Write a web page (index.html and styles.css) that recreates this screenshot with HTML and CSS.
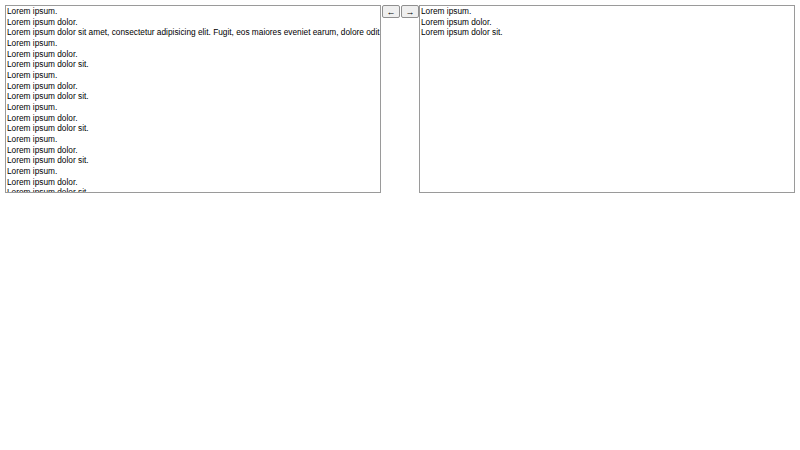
FILE: index.html
```html
<!DOCTYPE html>
<html>
<head>
<meta charset="utf-8">
<link rel="stylesheet" href="styles.css">
</head>
<body>
<div class="wrap">
  <div class="list">
    <div class="opt">Lorem ipsum.</div>
    <div class="opt">Lorem ipsum dolor.</div>
    <div class="opt">Lorem ipsum dolor sit amet, consectetur adipisicing elit. Fugit, eos maiores eveniet earum, dolore odit quia voluptatum.</div>
    <div class="opt">Lorem ipsum.</div>
    <div class="opt">Lorem ipsum dolor.</div>
    <div class="opt">Lorem ipsum dolor sit.</div>
    <div class="opt">Lorem ipsum.</div>
    <div class="opt">Lorem ipsum dolor.</div>
    <div class="opt">Lorem ipsum dolor sit.</div>
    <div class="opt">Lorem ipsum.</div>
    <div class="opt">Lorem ipsum dolor.</div>
    <div class="opt">Lorem ipsum dolor sit.</div>
    <div class="opt">Lorem ipsum.</div>
    <div class="opt">Lorem ipsum dolor.</div>
    <div class="opt">Lorem ipsum dolor sit.</div>
    <div class="opt">Lorem ipsum.</div>
    <div class="opt">Lorem ipsum dolor.</div>
    <div class="opt">Lorem ipsum dolor sit.</div>
    <div class="opt">Lorem ipsum.</div>
    <div class="opt">Lorem ipsum dolor.</div>
  </div>
  <div class="btns">
    <button class="btn">&larr;</button>
    <button class="btn">&rarr;</button>
  </div>
  <div class="list">
    <div class="opt">Lorem ipsum.</div>
    <div class="opt">Lorem ipsum dolor.</div>
    <div class="opt">Lorem ipsum dolor sit.</div>
  </div>
</div>
</body>
</html>
```
FILE: styles.css
```css
html, body {
  margin: 0;
  padding: 0;
  background: #fff;
}
body {
  padding: 5px;
  font-family: "Liberation Sans", Arial, sans-serif;
}
.wrap {
  display: flex;
  align-items: flex-start;
}
.list {
  box-sizing: border-box;
  width: 376px;
  height: 188px;
  border: 1px solid #9a9a9a;
  overflow: hidden;
  padding: 0 1px;
  font-size: 8.3px;
  line-height: 10.65px;
  color: #000;
}
.opt {
  white-space: nowrap;
}
.btns {
  display: flex;
  gap: 1px;
  padding: 0 0 0 1px;
}
.btn {
  box-sizing: border-box;
  width: 18px;
  height: 13px;
  margin: 0;
  padding: 0;
  border: 1px solid #8f8f8f;
  border-radius: 2px;
  background: #efefef;
  font-family: "Liberation Sans", Arial, sans-serif;
  font-size: 9px;
  line-height: 10px;
  color: #000;
}
```
